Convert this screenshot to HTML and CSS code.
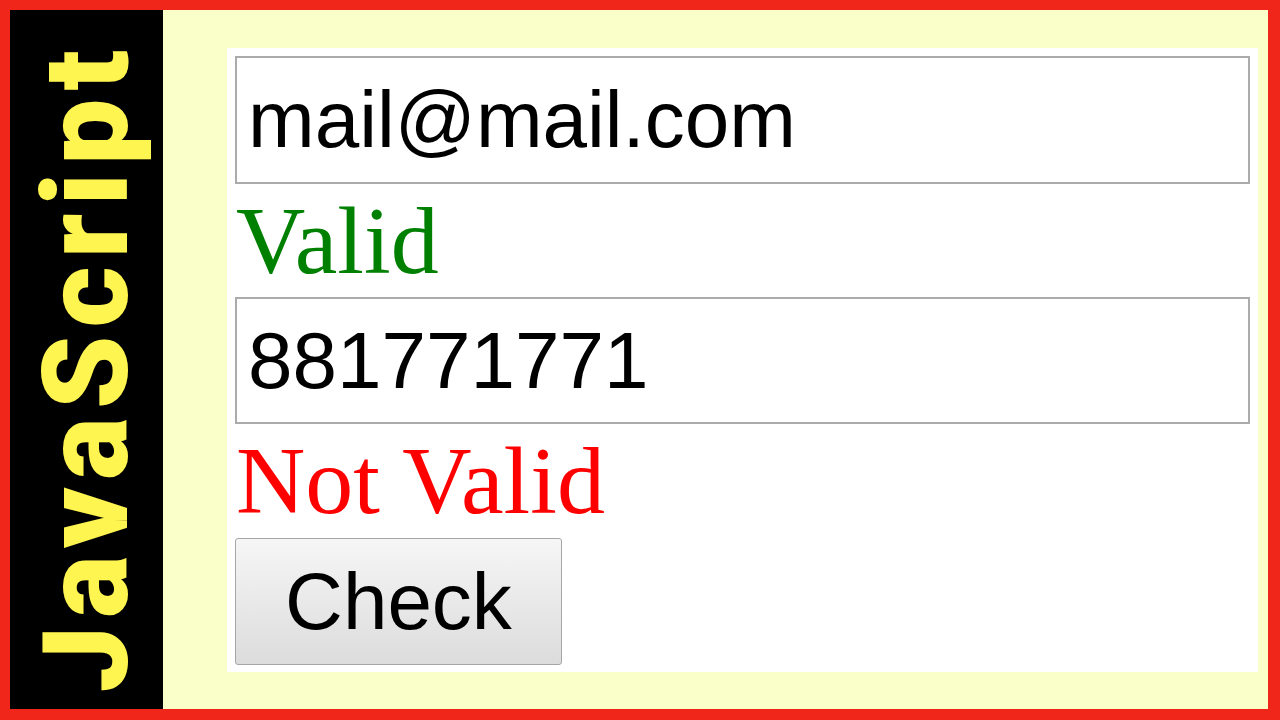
FILE: index.html
```html
<!DOCTYPE html>
<html>
<head>
<meta charset="utf-8">
<link rel="stylesheet" href="styles.css">
</head>
<body>
<div class="frame">
  <div class="side"><span class="side-title">JavaScript</span></div>
  <div class="main">
    <div class="panel">
      <input class="field" type="text" value="mail@mail.com">
      <div class="msg msg-ok">Valid</div>
      <input class="field" type="text" value="881771771">
      <div class="msg msg-bad">Not Valid</div>
      <button class="check-btn">Check</button>
    </div>
  </div>
</div>
</body>
</html>
```

FILE: styles.css
```css
html, body {
  margin: 0;
  padding: 0;
}
.frame {
  width: 1280px;
  height: 720px;
  box-sizing: border-box;
  border-style: solid;
  border-color: #f0261a;
  border-width: 10px 12px 11px 10px;
  display: flex;
}
.side {
  width: 153px;
  flex: none;
  background: #000;
  display: flex;
  align-items: center;
  justify-content: center;
  padding-top: 16px;
  box-sizing: border-box;
}
.side-title {
  writing-mode: vertical-rl;
  transform: rotate(180deg);
  font-family: Roboto, sans-serif;
  font-weight: 900;
  font-size: 118px;
  line-height: 1;
  color: #fff550;
  letter-spacing: 8px;
  white-space: nowrap;
}
.main {
  flex: 1;
  background: #fafec8;
  padding: 38px 10px 37px 64px;
  box-sizing: border-box;
}
.panel {
  background: #fff;
  height: 100%;
  box-sizing: border-box;
  padding: 8px 8px 7px 8px;
  display: flex;
  flex-direction: column;
  align-items: flex-start;
}
.field {
  display: block;
  width: 100%;
  height: 128px;
  box-sizing: border-box;
  border: 2px solid #ababab;
  padding: 0 8px 0 11px;
  margin: 0;
  font-family: "Liberation Sans", Arial, sans-serif;
  font-size: 80px;
  color: #000;
  background: #fff;
  outline: none;
}
.msg {
  font-family: "Liberation Serif", "Times New Roman", serif;
  font-size: 96px;
  line-height: 113px;
  height: 113px;
  padding-left: 1px;
  white-space: nowrap;
}
.msg-bad {
  height: 114px;
  line-height: 114px;
}
.msg-ok {
  color: #008000;
}
.msg-bad {
  color: #ff0000;
}
.check-btn {
  width: 327px;
  height: 127px;
  box-sizing: border-box;
  margin: 0;
  padding: 0;
  border: 1px solid #a6a6a6;
  border-radius: 3px;
  background: linear-gradient(#f6f6f6, #dcdcdc);
  font-family: "Liberation Sans", Arial, sans-serif;
  font-size: 80px;
  color: #000;
}
```
